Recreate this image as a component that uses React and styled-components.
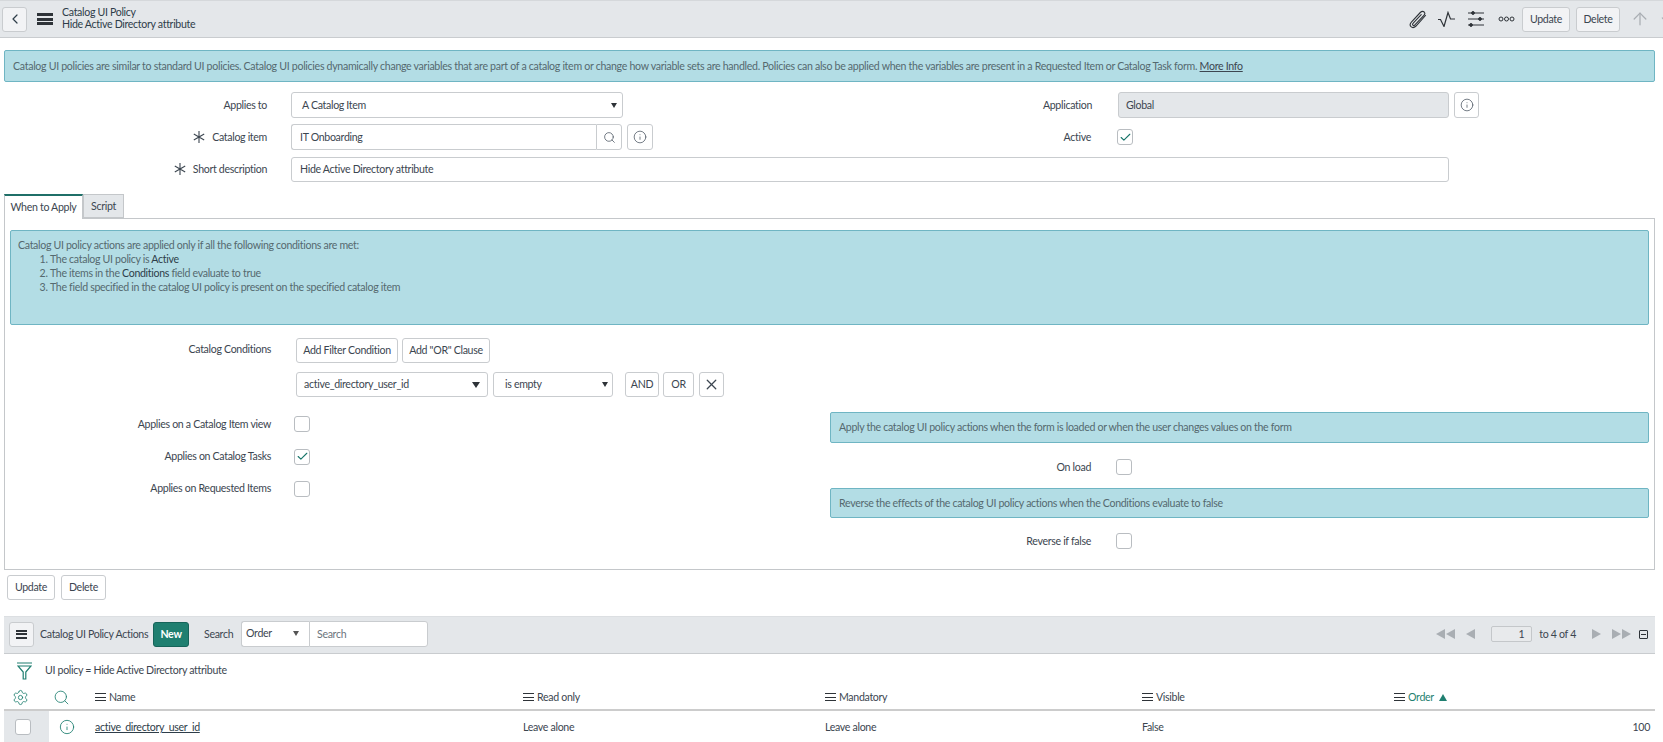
import React from "react";
import styled, { createGlobalStyle } from "styled-components";
import { Search, Info, X, Check, Settings, ArrowUp, ChevronDown, ChevronLeft } from "lucide-react";

const Global = createGlobalStyle`
  html, body { margin: 0; padding: 0; background: #fff; }
  * { box-sizing: border-box; }
`;
const Page = styled.div`
  width: 1663px; height: 742px; overflow: hidden; position: relative;
  font-family: Lato, "Liberation Sans", sans-serif; font-size: 10.6px; letter-spacing: -0.32px; color: #3c4650; line-height: 1.2;
`;
const TopBar = styled.header`
  display: flex; align-items: center; height: 38px; background: #e4e7ea;
  border-top: 1px solid #d5d8db; border-bottom: 1px solid #c9cccf; padding: 0 0 0 2px; white-space: nowrap; overflow: hidden;
`;
const BackBtn = styled.button`
  width: 25px; height: 25px; padding: 0; display: flex; align-items: center; justify-content: center;
  background: #f2f3f5; border: 1px solid #c9cccf; border-radius: 3px; color: #2e3d49;
`;
const Burger = styled.span`
  display: block; width: ${p => p.$w || 16}px; height: ${p => p.$h || 12}px; margin-left: ${p => p.$ml || 0}px;
  flex: none;
  border-top: ${p => p.$t || 3}px solid #2e3338; border-bottom: ${p => p.$t || 3}px solid #2e3338;
  position: relative;
  &::after { content: ""; position: absolute; left: 0; right: 0; top: 50%; margin-top: -${p => (p.$t || 3) / 2}px; height: ${p => p.$t || 3}px; background: #2e3338; }
`;
const TitleBlock = styled.div`
  margin-left: 9px; padding-bottom: 1px; line-height: 11.5px; color: #2e3d49; flex: 1;
`;
const IconSlot = styled.span`
  display: flex; align-items: center; justify-content: center; width: ${p => p.$w}px; color: ${p => p.$c || "#2e3338"}; flex: none;
  margin-left: ${p => p.$ml || 0}px; margin-right: ${p => p.$mr || 0}px;
`;
const Btn = styled.button`
  height: ${p => p.$h || 25}px; width: ${p => p.$w}px; margin-left: ${p => p.$ml || 0}px; padding: 0; flex: none;
  display: inline-flex; align-items: center; justify-content: center;
  font: inherit; letter-spacing: inherit; color: #3c4650; background: ${p => p.$bg || "#fff"};
  border: 1px solid #c9cccf; border-radius: 3px; white-space: nowrap;
`;
const InfoBox = styled.div`
  background: #b3dde5; border: 1px solid #6fb5c3; border-radius: 2px; color: #55696f;
  display: ${p => (p.$center ? "flex" : "block")}; align-items: center;
  height: ${p => p.$h}px; padding: ${p => p.$pad || "0 8px"};
  margin: ${p => p.$m || 0};
  letter-spacing: ${p => p.$ls || "inherit"};
`;
const MoreLink = styled.span` color: #3c4650; text-decoration: underline; `;
const FormRow = styled.div`
  display: flex; align-items: center; height: ${p => p.$h}px; margin-top: ${p => p.$mt || 0}px;
`;
const Label = styled.label`
  flex: none; width: ${p => p.$w}px; text-align: right; color: #3c4650; white-space: nowrap;
  display: flex; justify-content: flex-end; align-items: center; gap: 7px;
  margin-right: ${p => p.$mr}px; padding-bottom: ${p => p.$pb || 0}px;
`;
const Field = styled.div`
  flex: none; height: 100%; width: ${p => p.$w}px; margin-left: ${p => p.$ml || 0}px;
  display: flex; align-items: center; justify-content: space-between;
  padding: ${p => p.$pad || "0 8px"}; background: ${p => p.$bg || "#fff"};
  border: 1px solid #c9cccf; border-radius: ${p => p.$r || "3px"};
  border-right-width: ${p => (p.$nr ? 0 : 1)}px;
`;
const Caret = styled.span`
  flex: none; width: 0; height: 0; border-left: ${p => p.$s || 3.5}px solid transparent; border-right: ${p => p.$s || 3.5}px solid transparent;
  border-top: ${p => (p.$s || 3.5) + 2}px solid ${p => p.$c || "#2e3338"};
`;
const SquareBtn = styled(Btn)`
  color: #4a5560;
`;
const Addon = styled.div`
  flex: none; width: 26px; height: 100%; display: flex; align-items: center; justify-content: center;
  border: 1px solid #c9cccf; border-radius: 0 3px 3px 0; color: #4a5560;
`;
const Box = styled.span`
  flex: none; width: 16px; height: 16px; display: flex; align-items: center; justify-content: center;
  background: #fff; border: 1px solid #b9bdc1; border-radius: 3px; color: #17756a;
`;
const Tabs = styled.div` display: flex; margin: 12px 0 0 4px; height: 24px; `;
const Tab = styled.div`
  display: flex; align-items: center; justify-content: center; width: ${p => p.$w}px;
  white-space: nowrap; color: #3c4650;
  background: ${p => (p.$on ? "#fff" : "#e4e7ea")};
  border: 1px solid #c4c7ca; border-bottom-width: ${p => (p.$on ? 0 : 1)}px;
  border-top: ${p => (p.$on ? "2px solid #1f6f68" : "1px solid #c4c7ca")};
  position: relative; z-index: 1; height: ${p => (p.$on ? 25 : 24)}px;
`;
const Panel = styled.section`
  height: 352px; margin: 0 8px 0 4px; border: 1px solid #c4c7ca; padding: 11px 5px 0;
`;
const BulletList = styled.ol` margin: 0; padding: 0 0 0 32px; line-height: 14px; `;
const Strong = styled.span` color: #2e3d49; `;
const InfoLead = styled.div` line-height: 14px; `;
const CondRow = styled.div` display: flex; align-items: center; height: 25px; margin-top: ${p => p.$mt}px; `;
const Split = styled.div` display: grid; grid-template-columns: 820px 1fr; margin-top: 11px; `;
const Column = styled.div` padding-top: ${p => p.$pt || 0}px; `;
const CheckRow = styled.div` display: flex; align-items: center; height: ${p => p.$h}px; padding-top: ${p => p.$pt || 0}px; `;
const Actions = styled.div` display: flex; margin: 5px 0 0 7px; `;
const ListBar = styled.div`
  display: flex; align-items: center; height: 38px; margin: 16px 8px 0 4px; padding: 0 0 2px 5px; white-space: nowrap;
  background: #e4e7ea; border-top: 1px solid #dcdfe2; border-bottom: 1px solid #c9cccf;
`;
const BarText = styled.span` margin-left: ${p => p.$ml || 0}px; flex: none; color: ${p => p.$c || "#3c4650"}; width: ${p => (p.$w ? p.$w + "px" : "auto")}; `;
const NewBtn = styled(Btn)`
  background: #1f7f70; border-color: #16645a; color: #fff; font-weight: 700;
`;
const SearchSelect = styled(Field)` height: 26px; `;
const SearchHint = styled.span` color: #6b747c; `;
const Pager = styled.div` margin-left: auto; display: flex; align-items: center; color: #3c4650; `;
const PageInput = styled.div`
  width: 41px; height: 16px; margin: 0 7px 0 16px; text-align: right; padding-right: 7px; line-height: 14px;
  background: #e8eaec; border: 1px solid #c4c7ca; border-radius: 2px;
`;
const Tri = styled.span`
  flex: none; width: 0; height: 0; margin-left: ${p => p.$ml || 0}px;
  border-top: 5px solid transparent; border-bottom: 5px solid transparent;
  ${p => (p.$dir === "l" ? "border-right: 9px solid #a9aeb3;" : "border-left: 9px solid #a9aeb3;")}
`;
const Collapse = styled.span`
  flex: none; width: 9px; height: 9px; margin: 0 7px 0 8px; border: 1px solid #2e3338; border-radius: 1px; display: flex; align-items: center; justify-content: center;
  &::after { content: ""; width: 5px; height: 1px; background: #2e3338; }
`;
const FilterRow = styled.div` display: flex; align-items: center; height: 32px; padding: 1px 0 0 17px; `;
const Grid = `
  display: grid; grid-template-columns: 45px 46px 428px 302px 317px 252px 261px; margin: 0 8px 0 4px; align-items: center;
`;
const HeadRow = styled.div`
  ${Grid} height: 25px; border-bottom: 2px solid #ccc;
`;
const BodyRow = styled.div` ${Grid} height: 31px; `;
const HeadCell = styled.div`
  display: flex; align-items: center; gap: 3px; color: ${p => p.$c || "#3c4650"};
`;
const IconCell = styled.div`
  display: flex; align-items: center; padding-left: ${p => p.$pl}px; color: #1f7f70; height: 100%;
  background: ${p => p.$bg || "transparent"};
`;
const Cell = styled.div`
  color: #3c4650; text-align: ${p => p.$right ? "right" : "left"}; padding: 2px ${p => p.$right ? 5 : 0}px 0 0;
`;
const RowLink = styled.span` text-decoration: underline; color: #2e3d49; `;
const UpTri = styled.span` width: 0; height: 0; margin-left: 2px; border-left: 4px solid transparent; border-right: 4px solid transparent; border-bottom: 7px solid #1f7f70; `;

const Star = () => (
  <svg width="12" height="12" viewBox="0 0 12 12" stroke="#3c4650" strokeWidth="1.1" fill="none">
    <path d="M6 0v12M.8 3l10.4 6M11.2 3 .8 9" />
  </svg>
);
const Clip = () => (
  <svg width="19" height="19" viewBox="0 0 18 18" fill="none" stroke="#2e3338" strokeWidth="1.1" strokeLinecap="round">
    <path d="M16.5 5 7 15.5c-1.6 1.6-3.8 1.8-5 .7-1.2-1.2-1-3.2.6-4.9L11.3 2c1.2-1.2 2.9-1.4 3.9-.5.9 1 .7 2.5-.5 3.7L5.9 14.4c-.7.7-1.5.8-2 .3s-.4-1.3.3-2l8-8.6" />
  </svg>
);
const Pulse = () => (
  <svg width="18" height="16" viewBox="0 0 18 16" fill="none" stroke="#2e3338" strokeWidth="1.2">
    <path d="M0 8.5h2.5L6 15.5 10 1.5l2.5 6.5H17" />
  </svg>
);
const Sliders = () => (
  <svg width="17" height="18" viewBox="0 0 17 18" fill="#2e3338" stroke="#2e3338">
    <path d="M0 3h16M0 9h16M0 15h16" strokeWidth="1" />
    <circle cx="5" cy="3" r="1.4" /><circle cx="12" cy="9" r="1.4" /><circle cx="3" cy="15" r="1.4" />
  </svg>
);
const Dots = () => (
  <svg width="17" height="6" viewBox="0 0 17 6" fill="none" stroke="#2e3338" strokeWidth="1">
    <circle cx="3" cy="3" r="2" /><circle cx="8.5" cy="3" r="2" /><circle cx="14" cy="3" r="2" />
  </svg>
);
const Funnel = () => (
  <svg width="15" height="18" viewBox="0 0 15 18" fill="none" stroke="#1f7f70" strokeWidth="1.2">
    <path d="M0 1h15M1 4h13L8.8 10v7H6.2v-7z" />
  </svg>
);

const ColHead = ({ children, c }) => (
  <HeadCell $c={c}><Burger $w={11} $h={8} $t={1.5} />{children}</HeadCell>
);

export default function App() {
  return (
    <Page>
      <Global />
      <TopBar>
        <BackBtn><ChevronLeft size={16} strokeWidth={1.8} /></BackBtn>
        <Burger $ml={10} />
        <TitleBlock>Catalog UI Policy<br />Hide Active Directory attribute</TitleBlock>
        <IconSlot $w={18}><Clip /></IconSlot>
        <IconSlot $w={18} $ml={11}><Pulse /></IconSlot>
        <IconSlot $w={17} $ml={12}><Sliders /></IconSlot>
        <IconSlot $w={17} $ml={13}><Dots /></IconSlot>
        <Btn $w={48} $ml={7} $bg="#f2f3f5">Update</Btn>
        <Btn $w={44} $ml={6} $bg="#f2f3f5">Delete</Btn>
        <IconSlot $w={20} $ml={10} $c="#a9aeb3"><ArrowUp size={20} strokeWidth={1.5} /></IconSlot>
        <IconSlot $w={13} $ml={9} $mr={-9} $c="#a9aeb3"><ChevronDown size={13} /></IconSlot>
      </TopBar>

      <InfoBox $center $h={32} $m="12px 8px 10px 4px" $ls="-0.3px">
        <span>Catalog UI policies are similar to standard UI policies. Catalog UI policies dynamically change variables that are part of a catalog item or change how variable sets are handled. Policies can also be applied when the variables are present in a Requested Item or Catalog Task form. <MoreLink>More Info</MoreLink></span>
      </InfoBox>

      <FormRow $h={26}>
        <Label $w={267} $mr={24}>Applies to</Label>
        <Field $w={332} $pad="0 5px 0 10px"><span>A Catalog Item</span><Caret /></Field>
        <Label $w={469} $mr={26}>Application</Label>
        <Field $w={331} $bg="#e4e7ea" $pad="0 8px 0 7px"><span>Global</span></Field>
        <SquareBtn $w={25} $h={26} $ml={5}><Info size={14} strokeWidth={1.3} /></SquareBtn>
      </FormRow>
      <FormRow $h={26} $mt={6}>
        <Label $w={267} $mr={24}><Star />Catalog item</Label>
        <Field $w={305} $r="3px 0 0 3px" $nr><span>IT Onboarding</span></Field>
        <Addon><Search size={13} strokeWidth={1.4} /></Addon>
        <SquareBtn $w={26} $h={26} $ml={5}><Info size={14} strokeWidth={1.3} /></SquareBtn>
        <Label $w={438} $mr={26}>Active</Label>
        <Box><Check size={13} strokeWidth={2} /></Box>
      </FormRow>
      <FormRow $h={25} $mt={7}>
        <Label $w={267} $mr={24}><Star />Short description</Label>
        <Field $w={1158}><span>Hide Active Directory attribute</span></Field>
      </FormRow>

      <Tabs>
        <Tab $w={79} $on>When to Apply</Tab>
        <Tab $w={41}>Script</Tab>
      </Tabs>
      <Panel>
        <InfoBox $h={95} $pad="7px 7px">
          <InfoLead>Catalog UI policy actions are applied only if all the following conditions are met:</InfoLead>
          <BulletList>
            <li>The catalog UI policy is <Strong>Active</Strong></li>
            <li>The items in the <Strong>Conditions</Strong> field evaluate to true</li>
            <li>The field specified in the catalog UI policy is present on the specified catalog item</li>
          </BulletList>
        </InfoBox>
        <CondRow $mt={13}>
          <Label $w={261} $mr={25} $pb={3}>Catalog Conditions</Label>
          <Btn $w={102} $h={25}>Add Filter Condition</Btn>
          <Btn $w={88} $h={25} $ml={4}>Add "OR" Clause</Btn>
        </CondRow>
        <CondRow $mt={9}>
          <Label $w={261} $mr={25} />
          <Field $w={192} $pad="0 7px 0 7px"><span>active_directory_user_id</span><Caret $s={4} /></Field>
          <Field $w={120} $ml={5} $pad="0 4px 0 11px"><span>is empty</span><Caret /></Field>
          <Btn $w={34} $h={25} $ml={12}>AND</Btn>
          <Btn $w={31} $h={25} $ml={4}>OR</Btn>
          <Btn $w={25} $h={25} $ml={5}><X size={17} strokeWidth={1.8} /></Btn>
        </CondRow>
        <Split>
          <Column>
            <CheckRow $h={32.5}><Label $w={261} $mr={23}>Applies on a Catalog Item view</Label><Box /></CheckRow>
            <CheckRow $h={32.5}><Label $w={261} $mr={23}>Applies on Catalog Tasks</Label><Box><Check size={13} strokeWidth={2} /></Box></CheckRow>
            <CheckRow $h={32.5}><Label $w={261} $mr={23} $pb={2}>Applies on Requested Items</Label><Box /></CheckRow>
          </Column>
          <Column $pt={4}>
            <InfoBox $center $h={31}>Apply the catalog UI policy actions when the form is loaded or when the user changes values on the form</InfoBox>
            <CheckRow $h={45} $pt={3}><Label $w={261} $mr={25}>On load</Label><Box /></CheckRow>
            <InfoBox $center $h={30}>Reverse the effects of the catalog UI policy actions when the Conditions evaluate to false</InfoBox>
            <CheckRow $h={46}><Label $w={261} $mr={25}>Reverse if false</Label><Box /></CheckRow>
          </Column>
        </Split>
      </Panel>
      <Actions>
        <Btn $w={48}>Update</Btn>
        <Btn $w={45} $ml={6}>Delete</Btn>
      </Actions>

      <ListBar>
        <Btn $w={25} $bg="#f2f3f5"><Burger $w={11} $h={9} $t={2} /></Btn>
        <BarText $ml={6} $w={113}>Catalog UI Policy Actions</BarText>
        <NewBtn $w={36}>New</NewBtn>
        <BarText $ml={15} $w={37}>Search</BarText>
        <SearchSelect $w={68} $r="3px 0 0 3px" $nr $pad="0 10px 2px 4px"><span>Order</span><Caret $c="#555" /></SearchSelect>
        <SearchSelect $w={119} $r="0 3px 3px 0" $pad="0 7px"><SearchHint>Search</SearchHint></SearchSelect>
        <Pager>
          <Tri $dir="l" /><Tri $dir="l" $ml={1} />
          <Tri $dir="l" $ml={11} />
          <PageInput>1</PageInput>
          <span>to 4 of 4</span>
          <Tri $dir="r" $ml={16} />
          <Tri $dir="r" $ml={11} /><Tri $dir="r" $ml={1} />
          <Collapse />
        </Pager>
      </ListBar>
      <FilterRow>
        <Funnel />
        <BarText $ml={13}>UI policy = Hide Active Directory attribute</BarText>
      </FilterRow>
      <HeadRow>
        <IconCell $pl={8}><Settings size={17} strokeWidth={1.2} /></IconCell>
        <IconCell $pl={4}><Search size={17} strokeWidth={1.2} /></IconCell>
        <ColHead>Name</ColHead>
        <ColHead>Read only</ColHead>
        <ColHead>Mandatory</ColHead>
        <ColHead>Visible</ColHead>
        <ColHead c="#1f7f70">Order<UpTri /></ColHead>
      </HeadRow>
      <BodyRow>
        <IconCell $pl={11} $bg="#e4e7ea"><Box /></IconCell>
        <IconCell $pl={10}><Info size={16} strokeWidth={1.3} /></IconCell>
        <Cell><RowLink>active_directory_user_id</RowLink></Cell>
        <Cell>Leave alone</Cell>
        <Cell>Leave alone</Cell>
        <Cell>False</Cell>
        <Cell $right>100</Cell>
      </BodyRow>
    </Page>
  );
}
